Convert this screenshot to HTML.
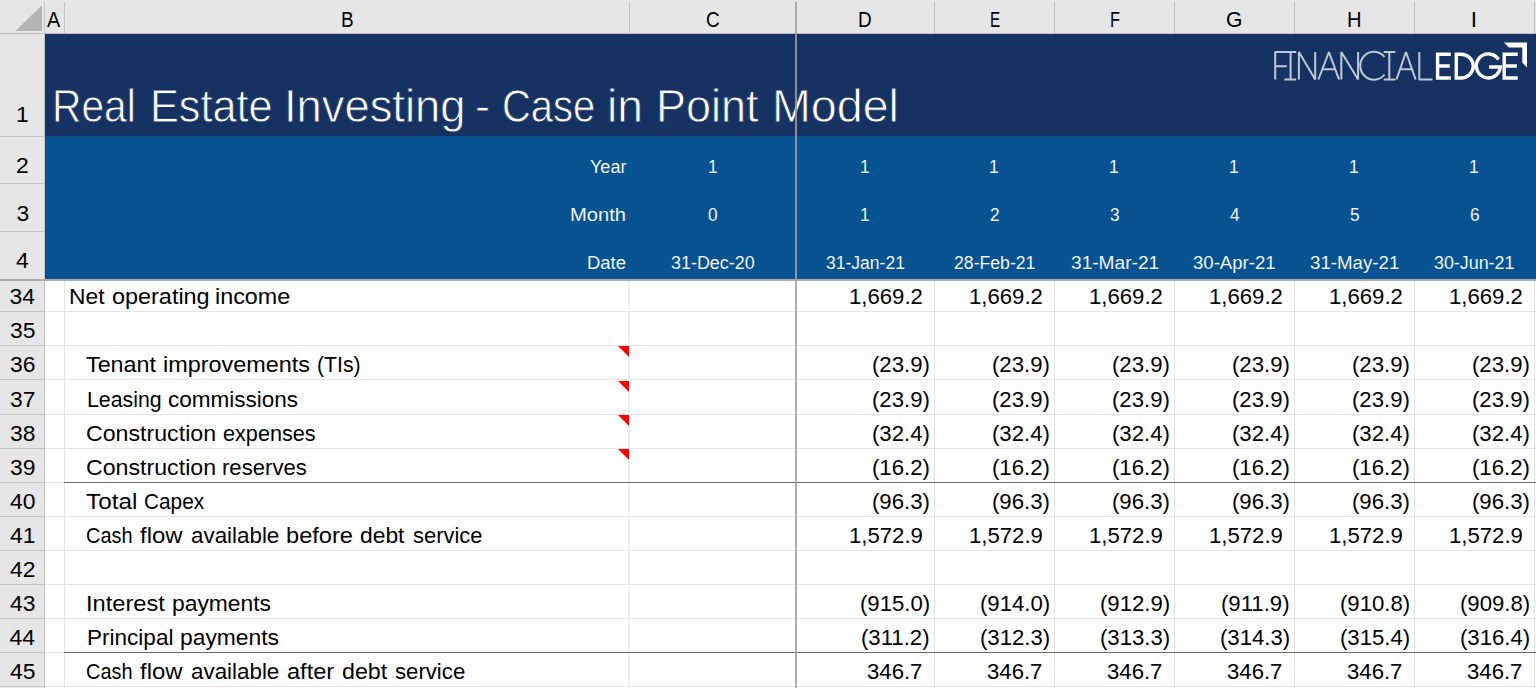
<!DOCTYPE html>
<html><head><meta charset="utf-8"><style>
html,body{margin:0;padding:0;}
body{width:1536px;height:688px;overflow:hidden;position:relative;background:#fff;font-family:"Liberation Sans",sans-serif;}
.r{position:absolute;}
.t{position:absolute;white-space:nowrap;line-height:1;transform-origin:0 0;}
</style></head><body>
<div class="r" style="left:0px;top:0px;width:1536px;height:33px;background:#e6e6e6"></div><div class="r" style="left:0px;top:33px;width:1536px;height:1px;background:#bdbdbd"></div><div class="r" style="left:0px;top:34px;width:44px;height:654px;background:#e6e6e6"></div><div class="r" style="left:44px;top:34px;width:1px;height:654px;background:#c4c4c4"></div><div class="r" style="left:44px;top:2px;width:1px;height:31px;background:#c4c4c4"></div><div class="r" style="left:64px;top:2px;width:1px;height:31px;background:#c4c4c4"></div><div class="r" style="left:629px;top:2px;width:1px;height:31px;background:#c4c4c4"></div><div class="r" style="left:934px;top:2px;width:1px;height:31px;background:#c4c4c4"></div><div class="r" style="left:1054px;top:2px;width:1px;height:31px;background:#c4c4c4"></div><div class="r" style="left:1174px;top:2px;width:1px;height:31px;background:#c4c4c4"></div><div class="r" style="left:1294px;top:2px;width:1px;height:31px;background:#c4c4c4"></div><div class="r" style="left:1414px;top:2px;width:1px;height:31px;background:#c4c4c4"></div><div class="r" style="left:1534px;top:2px;width:1px;height:31px;background:#c4c4c4"></div><div class="r" style="left:45px;top:34px;width:1491px;height:102px;background:#163262"></div><div class="r" style="left:45px;top:136px;width:1491px;height:143px;background:#075392"></div><div class="r" style="left:0px;top:136px;width:44px;height:1px;background:#c4c4c4"></div><div class="r" style="left:0px;top:183px;width:44px;height:1px;background:#c4c4c4"></div><div class="r" style="left:0px;top:231px;width:44px;height:1px;background:#c4c4c4"></div><div class="r" style="left:45px;top:311px;width:1491px;height:1px;background:#e4e4e4"></div><div class="r" style="left:0px;top:311px;width:44px;height:1px;background:#c4c4c4"></div><div class="r" style="left:45px;top:345px;width:1491px;height:1px;background:#e4e4e4"></div><div class="r" style="left:0px;top:345px;width:44px;height:1px;background:#c4c4c4"></div><div class="r" style="left:45px;top:379px;width:1491px;height:1px;background:#e4e4e4"></div><div class="r" style="left:0px;top:379px;width:44px;height:1px;background:#c4c4c4"></div><div class="r" style="left:45px;top:414px;width:1491px;height:1px;background:#e4e4e4"></div><div class="r" style="left:0px;top:414px;width:44px;height:1px;background:#c4c4c4"></div><div class="r" style="left:45px;top:448px;width:1491px;height:1px;background:#e4e4e4"></div><div class="r" style="left:0px;top:448px;width:44px;height:1px;background:#c4c4c4"></div><div class="r" style="left:45px;top:482px;width:1491px;height:1px;background:#e4e4e4"></div><div class="r" style="left:0px;top:482px;width:44px;height:1px;background:#c4c4c4"></div><div class="r" style="left:45px;top:516px;width:1491px;height:1px;background:#e4e4e4"></div><div class="r" style="left:0px;top:516px;width:44px;height:1px;background:#c4c4c4"></div><div class="r" style="left:45px;top:550px;width:1491px;height:1px;background:#e4e4e4"></div><div class="r" style="left:0px;top:550px;width:44px;height:1px;background:#c4c4c4"></div><div class="r" style="left:45px;top:584px;width:1491px;height:1px;background:#e4e4e4"></div><div class="r" style="left:0px;top:584px;width:44px;height:1px;background:#c4c4c4"></div><div class="r" style="left:45px;top:618px;width:1491px;height:1px;background:#e4e4e4"></div><div class="r" style="left:0px;top:618px;width:44px;height:1px;background:#c4c4c4"></div><div class="r" style="left:45px;top:652px;width:1491px;height:1px;background:#e4e4e4"></div><div class="r" style="left:0px;top:652px;width:44px;height:1px;background:#c4c4c4"></div><div class="r" style="left:45px;top:686px;width:1491px;height:1px;background:#e4e4e4"></div><div class="r" style="left:0px;top:686px;width:44px;height:1px;background:#c4c4c4"></div><div class="r" style="left:64px;top:281px;width:1px;height:407px;background:#e4e4e4"></div><div class="r" style="left:934px;top:281px;width:1px;height:407px;background:#e4e4e4"></div><div class="r" style="left:1054px;top:281px;width:1px;height:407px;background:#e4e4e4"></div><div class="r" style="left:1174px;top:281px;width:1px;height:407px;background:#e4e4e4"></div><div class="r" style="left:1294px;top:281px;width:1px;height:407px;background:#e4e4e4"></div><div class="r" style="left:1414px;top:281px;width:1px;height:407px;background:#e4e4e4"></div><div class="r" style="left:1534px;top:281px;width:1px;height:407px;background:#e4e4e4"></div><div class="r" style="left:628px;top:281px;width:2px;height:407px;background:#efefef"></div><div class="r" style="left:64px;top:482px;width:1472px;height:1px;background:#6a6a6a"></div><div class="r" style="left:64px;top:652px;width:1472px;height:1px;background:#6a6a6a"></div><div class="r" style="left:0px;top:279px;width:1536px;height:2px;background:rgba(160,160,160,0.85)"></div>
<svg class="r" style="left:0;top:0" width="50" height="34"><polygon points="15.5,31 42,5 42,31" fill="#b4b4b4"/></svg>
<svg class="r" style="left:618px;top:346px" width="11" height="11"><polygon points="0,0 11,0 11,11" fill="#ff0000"/></svg><svg class="r" style="left:618px;top:381px" width="11" height="11"><polygon points="0,0 11,0 11,11" fill="#ff0000"/></svg><svg class="r" style="left:618px;top:415px" width="11" height="11"><polygon points="0,0 11,0 11,11" fill="#ff0000"/></svg><svg class="r" style="left:618px;top:449px" width="11" height="11"><polygon points="0,0 11,0 11,11" fill="#ff0000"/></svg>
<svg class="r" style="left:1260px;top:36px" width="276" height="60" viewBox="1260 36 276 60">
<g fill="none" stroke="#bfc8d6" stroke-width="2" stroke-linejoin="bevel">
<path d="M1275.2 79.5 V52 H1287.4 M1275.2 66.3 H1286.8"/>
<path d="M1290.6 52 V79.5 M1284.4 52 H1296.2 M1284.4 79.5 H1296.2"/>
<path d="M1298.9 79.5 V52 L1315.2 79.5 V52"/>
<path d="M1318.4 79.5 L1328.9 52 L1339 79.5 M1322 69.2 H1335.5"/>
<path d="M1341.3 79.5 V52 L1358.1 79.5 V52"/>
<path d="M1384.5 57 A13.6 14 0 1 0 1384.5 74.5"/>
<path d="M1389.3 52 V79.5 M1383.7 52 H1395.4 M1383.7 79.5 H1395.4"/>
<path d="M1396.5 79.5 L1406 52 L1415.6 79.5 M1399.5 69.2 H1412.5"/>
<path d="M1419.3 52 V79.5 H1432.5"/>
</g>
<g fill="none" stroke="#ffffff" stroke-width="3.4">
<path d="M1450.8 54.2 H1437.6 V78 H1450.8 M1437.6 66 H1449.8"/>
<path d="M1456.3 54.2 V78 H1461 A12.3 11.9 0 0 0 1461 54.2 Z"/>
<path d="M1498.5 59.5 A12 12 0 1 0 1500.3 67 H1489"/>
<path d="M1517.8 54.2 H1504.2 V78 H1517.8 M1504.2 66 H1516.8"/>
</g>
<polygon fill="#ffffff" points="1504,42.6 1527,42.6 1527,67.4 1522.3,62.6 1522.3,47.4 1509,47.4"/>
</svg>
<div class="t" style="left:47.40px;top:8.80px;font-size:22.6px;color:#000;transform:scaleX(0.8750);">A</div><div class="t" style="left:341.26px;top:8.80px;font-size:22.6px;color:#000;transform:scaleX(0.8385);">B</div><div class="t" style="left:705.86px;top:8.80px;font-size:22.6px;color:#000;transform:scaleX(0.8400);">C</div><div class="t" style="left:858.16px;top:8.80px;font-size:22.6px;color:#000;transform:scaleX(0.8400);">D</div><div class="t" style="left:989.52px;top:8.80px;font-size:22.6px;color:#000;transform:scaleX(0.6786);">E</div><div class="t" style="left:1110.28px;top:8.80px;font-size:22.6px;color:#000;transform:scaleX(0.7250);">F</div><div class="t" style="left:1226.07px;top:8.80px;font-size:22.6px;color:#000;transform:scaleX(0.9333);">G</div><div class="t" style="left:1347.21px;top:8.80px;font-size:22.6px;color:#000;transform:scaleX(0.8929);">H</div><div class="t" style="left:1470.70px;top:8.80px;font-size:22.6px;color:#000;">I</div><div class="t" style="left:15.90px;top:103.15px;font-size:22.9px;color:#000;">1</div><div class="t" style="left:15.90px;top:154.15px;font-size:22.9px;color:#000;">2</div><div class="t" style="left:16.40px;top:202.15px;font-size:22.9px;color:#000;">3</div><div class="t" style="left:15.90px;top:249.15px;font-size:22.9px;color:#000;">4</div><div class="t" style="left:9.53px;top:285.15px;font-size:22.9px;color:#000;">34</div><div class="t" style="left:10.03px;top:319.15px;font-size:22.9px;color:#000;">35</div><div class="t" style="left:10.03px;top:353.15px;font-size:22.9px;color:#000;">36</div><div class="t" style="left:10.03px;top:388.15px;font-size:22.9px;color:#000;">37</div><div class="t" style="left:10.03px;top:422.15px;font-size:22.9px;color:#000;">38</div><div class="t" style="left:10.03px;top:456.15px;font-size:22.9px;color:#000;">39</div><div class="t" style="left:10.03px;top:490.15px;font-size:22.9px;color:#000;">40</div><div class="t" style="left:10.03px;top:524.15px;font-size:22.9px;color:#000;">41</div><div class="t" style="left:10.03px;top:558.15px;font-size:22.9px;color:#000;">42</div><div class="t" style="left:10.03px;top:592.15px;font-size:22.9px;color:#000;">43</div><div class="t" style="left:9.53px;top:626.15px;font-size:22.9px;color:#000;">44</div><div class="t" style="left:10.03px;top:660.15px;font-size:22.9px;color:#000;">45</div><div class="t" style="left:52.27px;top:83.40px;font-size:46.4px;color:#fff;transform:scaleX(0.8779);-webkit-text-stroke:0.8px #163262;">Real</div><div class="t" style="left:149.70px;top:83.40px;font-size:46.4px;color:#fff;transform:scaleX(0.9328);-webkit-text-stroke:0.8px #163262;">Estate</div><div class="t" style="left:283.89px;top:83.40px;font-size:46.4px;color:#fff;transform:scaleX(0.9772);-webkit-text-stroke:0.8px #163262;">Investing</div><div class="t" style="left:475.35px;top:83.40px;font-size:46.4px;color:#fff;transform:scaleX(0.9750);-webkit-text-stroke:0.8px #163262;">-</div><div class="t" style="left:502.18px;top:83.40px;font-size:46.4px;color:#fff;transform:scaleX(0.8603);-webkit-text-stroke:0.8px #163262;">Case</div><div class="t" style="left:607.41px;top:83.40px;font-size:46.4px;color:#fff;transform:scaleX(0.9965);-webkit-text-stroke:0.8px #163262;">in</div><div class="t" style="left:656.29px;top:83.40px;font-size:46.4px;color:#fff;transform:scaleX(0.9684);-webkit-text-stroke:0.8px #163262;">Point</div><div class="t" style="left:772.39px;top:83.40px;font-size:46.4px;color:#fff;transform:scaleX(1.0046);-webkit-text-stroke:0.8px #163262;">Model</div><div class="t" style="left:589.60px;top:157.70px;font-size:18.8px;color:#fff;transform:scaleX(0.9604);-webkit-text-stroke:0.12px #075392;">Year</div><div class="t" style="left:570.23px;top:205.70px;font-size:18.8px;color:#fff;transform:scaleX(1.0738);-webkit-text-stroke:0.12px #075392;">Month</div><div class="t" style="left:587.42px;top:253.70px;font-size:18.8px;color:#fff;transform:scaleX(0.9836);-webkit-text-stroke:0.12px #075392;">Date</div><div class="t" style="left:707.64px;top:157.70px;font-size:18.8px;color:#fff;transform:scaleX(0.9200);-webkit-text-stroke:0.12px #075392;">1</div><div class="t" style="left:707.60px;top:205.70px;font-size:18.8px;color:#fff;transform:scaleX(0.9200);-webkit-text-stroke:0.12px #075392;">0</div><div class="t" style="left:670.60px;top:253.70px;font-size:18.8px;color:#fff;transform:scaleX(0.9537);-webkit-text-stroke:0.12px #075392;">31-Dec-20</div><div class="t" style="left:859.94px;top:157.70px;font-size:18.8px;color:#fff;transform:scaleX(0.9200);-webkit-text-stroke:0.12px #075392;">1</div><div class="t" style="left:859.94px;top:205.70px;font-size:18.8px;color:#fff;transform:scaleX(0.9200);-webkit-text-stroke:0.12px #075392;">1</div><div class="t" style="left:825.50px;top:253.70px;font-size:18.8px;color:#fff;transform:scaleX(0.9331);-webkit-text-stroke:0.12px #075392;">31-Jan-21</div><div class="t" style="left:989.24px;top:157.70px;font-size:18.8px;color:#fff;transform:scaleX(0.9200);-webkit-text-stroke:0.12px #075392;">1</div><div class="t" style="left:989.70px;top:205.70px;font-size:18.8px;color:#fff;transform:scaleX(0.9200);-webkit-text-stroke:0.12px #075392;">2</div><div class="t" style="left:954.00px;top:253.70px;font-size:18.8px;color:#fff;transform:scaleX(0.9396);-webkit-text-stroke:0.12px #075392;">28-Feb-21</div><div class="t" style="left:1109.24px;top:157.70px;font-size:18.8px;color:#fff;transform:scaleX(0.9200);-webkit-text-stroke:0.12px #075392;">1</div><div class="t" style="left:1109.70px;top:205.70px;font-size:18.8px;color:#fff;transform:scaleX(0.9200);-webkit-text-stroke:0.12px #075392;">3</div><div class="t" style="left:1070.80px;top:253.70px;font-size:18.8px;color:#fff;transform:scaleX(1.0175);-webkit-text-stroke:0.12px #075392;">31-Mar-21</div><div class="t" style="left:1229.24px;top:157.70px;font-size:18.8px;color:#fff;transform:scaleX(0.9200);-webkit-text-stroke:0.12px #075392;">1</div><div class="t" style="left:1229.70px;top:205.70px;font-size:18.8px;color:#fff;transform:scaleX(0.9200);-webkit-text-stroke:0.12px #075392;">4</div><div class="t" style="left:1193.20px;top:253.70px;font-size:18.8px;color:#fff;transform:scaleX(0.9895);-webkit-text-stroke:0.12px #075392;">30-Apr-21</div><div class="t" style="left:1349.24px;top:157.70px;font-size:18.8px;color:#fff;transform:scaleX(0.9200);-webkit-text-stroke:0.12px #075392;">1</div><div class="t" style="left:1349.70px;top:205.70px;font-size:18.8px;color:#fff;transform:scaleX(0.9200);-webkit-text-stroke:0.12px #075392;">5</div><div class="t" style="left:1309.50px;top:253.70px;font-size:18.8px;color:#fff;transform:scaleX(0.9952);-webkit-text-stroke:0.12px #075392;">31-May-21</div><div class="t" style="left:1469.24px;top:157.70px;font-size:18.8px;color:#fff;transform:scaleX(0.9200);-webkit-text-stroke:0.12px #075392;">1</div><div class="t" style="left:1469.70px;top:205.70px;font-size:18.8px;color:#fff;transform:scaleX(0.9200);-webkit-text-stroke:0.12px #075392;">6</div><div class="t" style="left:1434.00px;top:253.70px;font-size:18.8px;color:#fff;transform:scaleX(0.9510);-webkit-text-stroke:0.12px #075392;">30-Jun-21</div><div class="t" style="left:68.80px;top:285.15px;font-size:22.9px;color:#000;transform:scaleX(0.9954);">Net</div><div class="t" style="left:112.40px;top:285.15px;font-size:22.9px;color:#000;transform:scaleX(1.0230);">operating</div><div class="t" style="left:215.28px;top:285.15px;font-size:22.9px;color:#000;transform:scaleX(1.0200);">income</div><div class="t" style="left:85.90px;top:353.15px;font-size:22.9px;color:#000;transform:scaleX(1.0178);">Tenant</div><div class="t" style="left:162.98px;top:353.15px;font-size:22.9px;color:#000;transform:scaleX(1.0218);">improvements</div><div class="t" style="left:316.57px;top:353.15px;font-size:22.9px;color:#000;transform:scaleX(0.9271);">(TIs)</div><div class="t" style="left:86.57px;top:388.15px;font-size:22.9px;color:#000;transform:scaleX(0.9305);">Leasing</div><div class="t" style="left:167.50px;top:388.15px;font-size:22.9px;color:#000;transform:scaleX(0.9830);">commissions</div><div class="t" style="left:85.89px;top:422.15px;font-size:22.9px;color:#000;transform:scaleX(1.0121);">Construction</div><div class="t" style="left:223.00px;top:422.15px;font-size:22.9px;color:#000;transform:scaleX(0.9452);">expenses</div><div class="t" style="left:85.89px;top:456.15px;font-size:22.9px;color:#000;transform:scaleX(1.0121);">Construction</div><div class="t" style="left:222.43px;top:456.15px;font-size:22.9px;color:#000;transform:scaleX(0.9661);">reserves</div><div class="t" style="left:85.90px;top:490.15px;font-size:22.9px;color:#000;transform:scaleX(1.0621);">Total</div><div class="t" style="left:143.79px;top:490.15px;font-size:22.9px;color:#000;transform:scaleX(0.9084);">Capex</div><div class="t" style="left:86.13px;top:524.15px;font-size:22.9px;color:#000;transform:scaleX(0.8703);">Cash</div><div class="t" style="left:140.20px;top:524.15px;font-size:22.9px;color:#000;transform:scaleX(1.0443);">flow</div><div class="t" style="left:190.70px;top:524.15px;font-size:22.9px;color:#000;transform:scaleX(0.9774);">available</div><div class="t" style="left:286.17px;top:524.15px;font-size:22.9px;color:#000;transform:scaleX(1.0321);">before</div><div class="t" style="left:360.30px;top:524.15px;font-size:22.9px;color:#000;transform:scaleX(0.9980);">debt</div><div class="t" style="left:413.30px;top:524.15px;font-size:22.9px;color:#000;transform:scaleX(0.9572);">service</div><div class="t" style="left:85.74px;top:592.15px;font-size:22.9px;color:#000;transform:scaleX(1.0323);">Interest</div><div class="t" style="left:172.00px;top:592.15px;font-size:22.9px;color:#000;transform:scaleX(0.9980);">payments</div><div class="t" style="left:86.82px;top:626.15px;font-size:22.9px;color:#000;transform:scaleX(0.9848);">Principal</div><div class="t" style="left:179.80px;top:626.15px;font-size:22.9px;color:#000;transform:scaleX(0.9980);">payments</div><div class="t" style="left:86.13px;top:660.15px;font-size:22.9px;color:#000;transform:scaleX(0.8703);">Cash</div><div class="t" style="left:140.20px;top:660.15px;font-size:22.9px;color:#000;transform:scaleX(1.0443);">flow</div><div class="t" style="left:190.70px;top:660.15px;font-size:22.9px;color:#000;transform:scaleX(0.9774);">available</div><div class="t" style="left:286.90px;top:660.15px;font-size:22.9px;color:#000;transform:scaleX(1.0307);">after</div><div class="t" style="left:341.60px;top:660.15px;font-size:22.9px;color:#000;transform:scaleX(1.0157);">debt</div><div class="t" style="left:394.60px;top:660.15px;font-size:22.9px;color:#000;transform:scaleX(0.9683);">service</div><div class="t" style="left:848.83px;top:285.15px;font-size:22.9px;color:#000;transform:scaleX(0.9673);">1,669.2</div><div class="t" style="left:968.83px;top:285.15px;font-size:22.9px;color:#000;transform:scaleX(0.9673);">1,669.2</div><div class="t" style="left:1088.83px;top:285.15px;font-size:22.9px;color:#000;transform:scaleX(0.9673);">1,669.2</div><div class="t" style="left:1208.83px;top:285.15px;font-size:22.9px;color:#000;transform:scaleX(0.9673);">1,669.2</div><div class="t" style="left:1328.83px;top:285.15px;font-size:22.9px;color:#000;transform:scaleX(0.9673);">1,669.2</div><div class="t" style="left:1448.83px;top:285.15px;font-size:22.9px;color:#000;transform:scaleX(0.9673);">1,669.2</div><div class="t" style="left:871.96px;top:353.15px;font-size:22.9px;color:#000;transform:scaleX(0.9673);">(23.9)</div><div class="t" style="left:991.96px;top:353.15px;font-size:22.9px;color:#000;transform:scaleX(0.9673);">(23.9)</div><div class="t" style="left:1111.96px;top:353.15px;font-size:22.9px;color:#000;transform:scaleX(0.9673);">(23.9)</div><div class="t" style="left:1231.96px;top:353.15px;font-size:22.9px;color:#000;transform:scaleX(0.9673);">(23.9)</div><div class="t" style="left:1351.96px;top:353.15px;font-size:22.9px;color:#000;transform:scaleX(0.9673);">(23.9)</div><div class="t" style="left:1471.96px;top:353.15px;font-size:22.9px;color:#000;transform:scaleX(0.9673);">(23.9)</div><div class="t" style="left:871.96px;top:388.15px;font-size:22.9px;color:#000;transform:scaleX(0.9673);">(23.9)</div><div class="t" style="left:991.96px;top:388.15px;font-size:22.9px;color:#000;transform:scaleX(0.9673);">(23.9)</div><div class="t" style="left:1111.96px;top:388.15px;font-size:22.9px;color:#000;transform:scaleX(0.9673);">(23.9)</div><div class="t" style="left:1231.96px;top:388.15px;font-size:22.9px;color:#000;transform:scaleX(0.9673);">(23.9)</div><div class="t" style="left:1351.96px;top:388.15px;font-size:22.9px;color:#000;transform:scaleX(0.9673);">(23.9)</div><div class="t" style="left:1471.96px;top:388.15px;font-size:22.9px;color:#000;transform:scaleX(0.9673);">(23.9)</div><div class="t" style="left:871.96px;top:422.15px;font-size:22.9px;color:#000;transform:scaleX(0.9673);">(32.4)</div><div class="t" style="left:991.96px;top:422.15px;font-size:22.9px;color:#000;transform:scaleX(0.9673);">(32.4)</div><div class="t" style="left:1111.96px;top:422.15px;font-size:22.9px;color:#000;transform:scaleX(0.9673);">(32.4)</div><div class="t" style="left:1231.96px;top:422.15px;font-size:22.9px;color:#000;transform:scaleX(0.9673);">(32.4)</div><div class="t" style="left:1351.96px;top:422.15px;font-size:22.9px;color:#000;transform:scaleX(0.9673);">(32.4)</div><div class="t" style="left:1471.96px;top:422.15px;font-size:22.9px;color:#000;transform:scaleX(0.9673);">(32.4)</div><div class="t" style="left:871.96px;top:456.15px;font-size:22.9px;color:#000;transform:scaleX(0.9673);">(16.2)</div><div class="t" style="left:991.96px;top:456.15px;font-size:22.9px;color:#000;transform:scaleX(0.9673);">(16.2)</div><div class="t" style="left:1111.96px;top:456.15px;font-size:22.9px;color:#000;transform:scaleX(0.9673);">(16.2)</div><div class="t" style="left:1231.96px;top:456.15px;font-size:22.9px;color:#000;transform:scaleX(0.9673);">(16.2)</div><div class="t" style="left:1351.96px;top:456.15px;font-size:22.9px;color:#000;transform:scaleX(0.9673);">(16.2)</div><div class="t" style="left:1471.96px;top:456.15px;font-size:22.9px;color:#000;transform:scaleX(0.9673);">(16.2)</div><div class="t" style="left:871.96px;top:490.15px;font-size:22.9px;color:#000;transform:scaleX(0.9673);">(96.3)</div><div class="t" style="left:991.96px;top:490.15px;font-size:22.9px;color:#000;transform:scaleX(0.9673);">(96.3)</div><div class="t" style="left:1111.96px;top:490.15px;font-size:22.9px;color:#000;transform:scaleX(0.9673);">(96.3)</div><div class="t" style="left:1231.96px;top:490.15px;font-size:22.9px;color:#000;transform:scaleX(0.9673);">(96.3)</div><div class="t" style="left:1351.96px;top:490.15px;font-size:22.9px;color:#000;transform:scaleX(0.9673);">(96.3)</div><div class="t" style="left:1471.96px;top:490.15px;font-size:22.9px;color:#000;transform:scaleX(0.9673);">(96.3)</div><div class="t" style="left:848.83px;top:524.15px;font-size:22.9px;color:#000;transform:scaleX(0.9673);">1,572.9</div><div class="t" style="left:968.83px;top:524.15px;font-size:22.9px;color:#000;transform:scaleX(0.9673);">1,572.9</div><div class="t" style="left:1088.83px;top:524.15px;font-size:22.9px;color:#000;transform:scaleX(0.9673);">1,572.9</div><div class="t" style="left:1208.83px;top:524.15px;font-size:22.9px;color:#000;transform:scaleX(0.9673);">1,572.9</div><div class="t" style="left:1328.83px;top:524.15px;font-size:22.9px;color:#000;transform:scaleX(0.9673);">1,572.9</div><div class="t" style="left:1448.83px;top:524.15px;font-size:22.9px;color:#000;transform:scaleX(0.9673);">1,572.9</div><div class="t" style="left:859.65px;top:592.15px;font-size:22.9px;color:#000;transform:scaleX(0.9673);">(915.0)</div><div class="t" style="left:979.65px;top:592.15px;font-size:22.9px;color:#000;transform:scaleX(0.9673);">(914.0)</div><div class="t" style="left:1099.65px;top:592.15px;font-size:22.9px;color:#000;transform:scaleX(0.9673);">(912.9)</div><div class="t" style="left:1221.29px;top:592.15px;font-size:22.9px;color:#000;transform:scaleX(0.9673);">(911.9)</div><div class="t" style="left:1339.65px;top:592.15px;font-size:22.9px;color:#000;transform:scaleX(0.9673);">(910.8)</div><div class="t" style="left:1459.65px;top:592.15px;font-size:22.9px;color:#000;transform:scaleX(0.9673);">(909.8)</div><div class="t" style="left:861.29px;top:626.15px;font-size:22.9px;color:#000;transform:scaleX(0.9673);">(311.2)</div><div class="t" style="left:979.65px;top:626.15px;font-size:22.9px;color:#000;transform:scaleX(0.9673);">(312.3)</div><div class="t" style="left:1099.65px;top:626.15px;font-size:22.9px;color:#000;transform:scaleX(0.9673);">(313.3)</div><div class="t" style="left:1219.65px;top:626.15px;font-size:22.9px;color:#000;transform:scaleX(0.9673);">(314.3)</div><div class="t" style="left:1339.65px;top:626.15px;font-size:22.9px;color:#000;transform:scaleX(0.9673);">(315.4)</div><div class="t" style="left:1459.65px;top:626.15px;font-size:22.9px;color:#000;transform:scaleX(0.9673);">(316.4)</div><div class="t" style="left:867.30px;top:660.15px;font-size:22.9px;color:#000;transform:scaleX(0.9673);">346.7</div><div class="t" style="left:987.30px;top:660.15px;font-size:22.9px;color:#000;transform:scaleX(0.9673);">346.7</div><div class="t" style="left:1107.30px;top:660.15px;font-size:22.9px;color:#000;transform:scaleX(0.9673);">346.7</div><div class="t" style="left:1227.30px;top:660.15px;font-size:22.9px;color:#000;transform:scaleX(0.9673);">346.7</div><div class="t" style="left:1347.30px;top:660.15px;font-size:22.9px;color:#000;transform:scaleX(0.9673);">346.7</div><div class="t" style="left:1467.30px;top:660.15px;font-size:22.9px;color:#000;transform:scaleX(0.9673);">346.7</div>
<div class="r" style="left:795px;top:2px;width:2px;height:686px;background:rgba(160,160,160,0.85)"></div>
</body></html>
